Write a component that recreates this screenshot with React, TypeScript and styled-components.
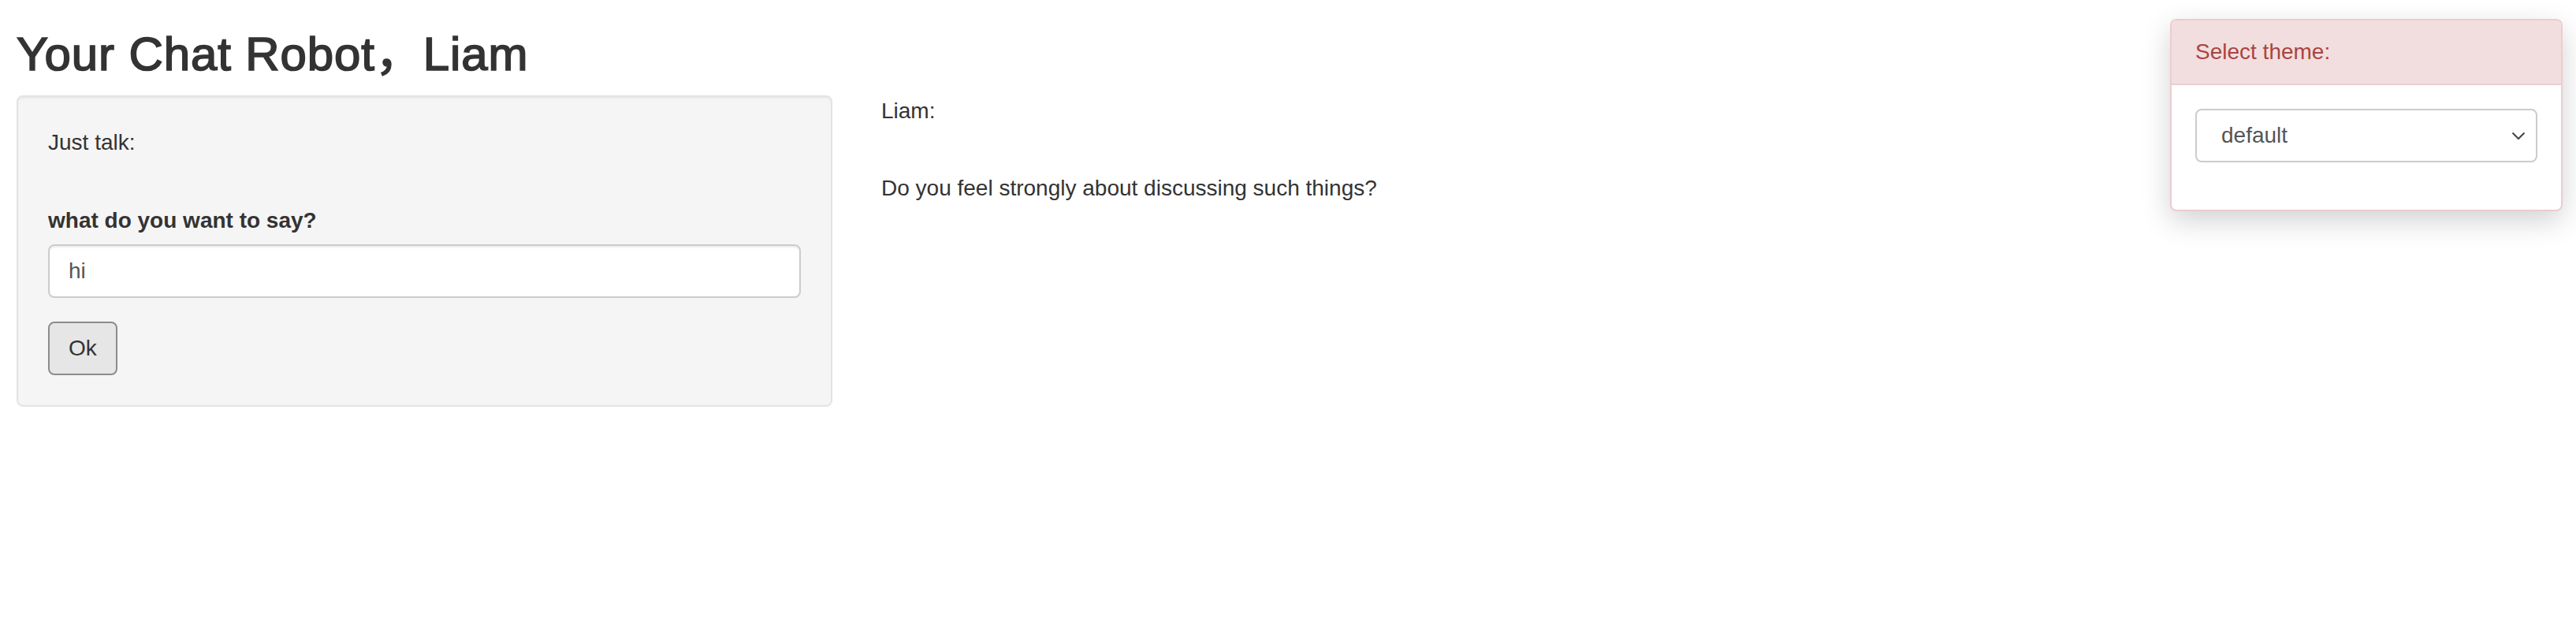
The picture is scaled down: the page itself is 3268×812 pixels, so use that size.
import React from "react";
import styled, { createGlobalStyle } from "styled-components";

const GlobalStyle = createGlobalStyle`
  html, body {
    margin: 0;
    padding: 0;
    background: #fff;
  }
  body {
    font-family: "Liberation Sans", Arial, "Noto Sans CJK SC", sans-serif;
    font-size: 28px;
    line-height: 40px;
    color: #333;
  }
  * {
    box-sizing: border-box;
  }
`;

const Page = styled.div`
  position: relative;
  min-height: 812px;
  padding: 36px 0 0 21px;
`;

const Title = styled.h2`
  margin: 0 0 19px;
  font-size: 60px;
  line-height: 66px;
  font-weight: 400;
  letter-spacing: 0.9px;
  -webkit-text-stroke: 1.7px #333;
  color: #333;
`;

const Row = styled.div`
  display: flex;
  align-items: flex-start;
  gap: 62px;
`;

const Well = styled.div`
  width: 1035px;
  padding: 38px;
  background: #f5f5f5;
  border: 2px solid #e3e3e3;
  border-radius: 8px;
  box-shadow: inset 0 2px 2px rgba(0, 0, 0, 0.05);
`;

const Para = styled.div<{ $gap?: number }>`
  margin-bottom: ${(p) => p.$gap ?? 0}px;
`;

const FormGroup = styled.div`
  margin-bottom: 30px;
`;

const Label = styled.label`
  display: block;
  font-weight: 700;
  margin-bottom: 10px;
`;

const TextInput = styled.input`
  display: block;
  width: 100%;
  height: 68px;
  padding: 12px 24px;
  font: inherit;
  color: #555;
  background: #fff;
  border: 2px solid #ccc;
  border-radius: 8px;
  box-shadow: inset 0 2px 2px rgba(0, 0, 0, 0.075);
  outline: none;
`;

const Button = styled.button`
  display: block;
  height: 68px;
  padding: 12px 24px;
  font: inherit;
  color: #333;
  background: #e6e6e6;
  border: 2px solid #8c8c8c;
  border-radius: 8px;
  cursor: pointer;
`;

const Main = styled.div`
  flex: 1;
`;

const ThemePanel = styled.div`
  position: absolute;
  top: 24px;
  right: 17px;
  width: 498px;
  background: #fff;
  border: 2px solid #ebccd1;
  border-radius: 8px;
  box-shadow: 0 12px 36px rgba(0, 0, 0, 0.18);
  overflow: hidden;
`;

const PanelHeading = styled.div`
  padding: 20px 30px 20px;
  background: #f2dede;
  color: #a94442;
  border-bottom: 2px solid #ebccd1;
`;

const PanelBody = styled.div`
  padding: 30px 30px 30px;
`;

const SelectWrap = styled.div`
  position: relative;
  margin-bottom: 30px;
`;

const Select = styled.select`
  display: block;
  width: 100%;
  height: 68px;
  padding: 0 50px 0 31px;
  font: inherit;
  color: #555;
  background: #fff;
  border: 2px solid #ccc;
  border-radius: 8px;
  appearance: none;
  -webkit-appearance: none;
  outline: none;
`;

const Chevron = styled.svg`
  position: absolute;
  right: 15px;
  top: 29px;
  pointer-events: none;
`;

export default function App() {
  return (
    <>
      <GlobalStyle />
      <Page>
        <Title>Your Chat Robot，Liam</Title>
        <Row>
          <Well>
            <Para $gap={59}>Just talk:</Para>
            <FormGroup>
              <Label htmlFor="say">what do you want to say?</Label>
              <TextInput id="say" type="text" defaultValue="hi" />
            </FormGroup>
            <Button type="button">Ok</Button>
          </Well>
          <Main>
            <Para $gap={58}>Liam:</Para>
            <Para>Do you feel strongly about discussing such things?</Para>
          </Main>
        </Row>
        <ThemePanel>
          <PanelHeading>Select theme:</PanelHeading>
          <PanelBody>
            <SelectWrap>
              <Select defaultValue="default">
                <option value="default">default</option>
              </Select>
              <Chevron width="18" height="11" viewBox="0 0 18 11">
                <path
                  d="M1.5 1.5 L9 9 L16.5 1.5"
                  fill="none"
                  stroke="#444"
                  strokeWidth="2"
                />
              </Chevron>
            </SelectWrap>
          </PanelBody>
        </ThemePanel>
      </Page>
    </>
  );
}
